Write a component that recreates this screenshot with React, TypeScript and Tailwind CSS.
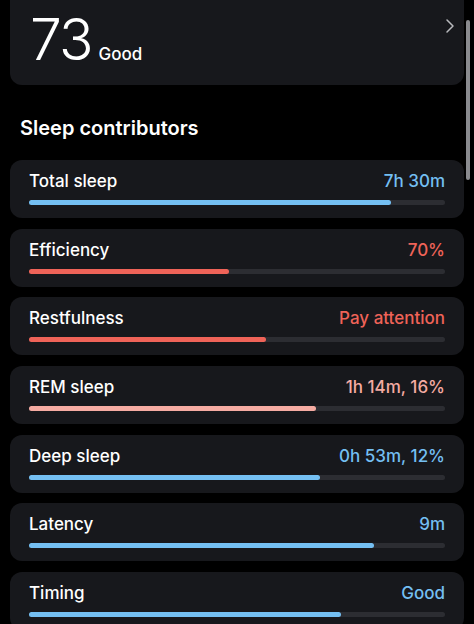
import { ChevronRight } from "lucide-react"

type Row = { label: string; value: string; pct: number; tone: "blue" | "red" | "salmon" }

const ROWS: Row[] = [
  { label: "Total sleep", value: "7h 30m", pct: 87, tone: "blue" },
  { label: "Efficiency", value: "70%", pct: 48, tone: "red" },
  { label: "Restfulness", value: "Pay attention", pct: 57, tone: "red" },
  { label: "REM sleep", value: "1h 14m, 16%", pct: 69, tone: "salmon" },
  { label: "Deep sleep", value: "0h 53m, 12%", pct: 70, tone: "blue" },
  { label: "Latency", value: "9m", pct: 83, tone: "blue" },
  { label: "Timing", value: "Good", pct: 75, tone: "blue" },
]

const TEXT = { blue: "text-[#74bff2]", red: "text-[#ef6358]", salmon: "text-[#f5aba2]" }
const BAR = { blue: "bg-[#74bff2]", red: "bg-[#ef6358]", salmon: "bg-[#f5aba2]" }

export default function App() {
  return (
    <div className="relative h-[624px] w-[474px] overflow-hidden bg-black font-['Inter',sans-serif] text-white">
      {/* scrollbar */}
      <div className="absolute right-[4px] top-[20px] h-[160px] w-[4px] rounded-full bg-[#8a8b8f]" />

      {/* score card */}
      <div className="mx-[10px] flex h-[85px] items-start justify-between rounded-b-[12px] bg-[#17181c] pl-[20px] pr-[2px]">
        <div className="flex items-baseline gap-[7px] pt-[10px]">
          <span className="text-[57px] font-light leading-[60px] tracking-[-2px]">73</span>
          <span className="text-[17px] font-medium">Good</span>
        </div>
        <ChevronRight className="mt-[14px] h-[24px] w-[24px] text-[#b8b9bd]" strokeWidth={1.5} />
      </div>

      <h2 className="px-[20px] pb-[20px] pt-[31px] text-[20px] font-semibold leading-[24px]">Sleep contributors</h2>

      <div className="flex flex-col gap-[10.7px] px-[10px]">
        {ROWS.map(r => (
          <div key={r.label} className="h-[58px] rounded-[12px] bg-[#17181c] px-[19px] pt-[9px]">
            <div className="flex items-center justify-between text-[17px] font-medium leading-[24px]">
              <span>{r.label}</span>
              <span className={TEXT[r.tone]}>{r.value}</span>
            </div>
            <div className="mt-[7px] h-[5px] w-full rounded-full bg-[#2c2d32]">
              <div className={`h-full rounded-full ${BAR[r.tone]}`} style={{ width: `${r.pct}%` }} />
            </div>
          </div>
        ))}
      </div>
    </div>
  )
}
